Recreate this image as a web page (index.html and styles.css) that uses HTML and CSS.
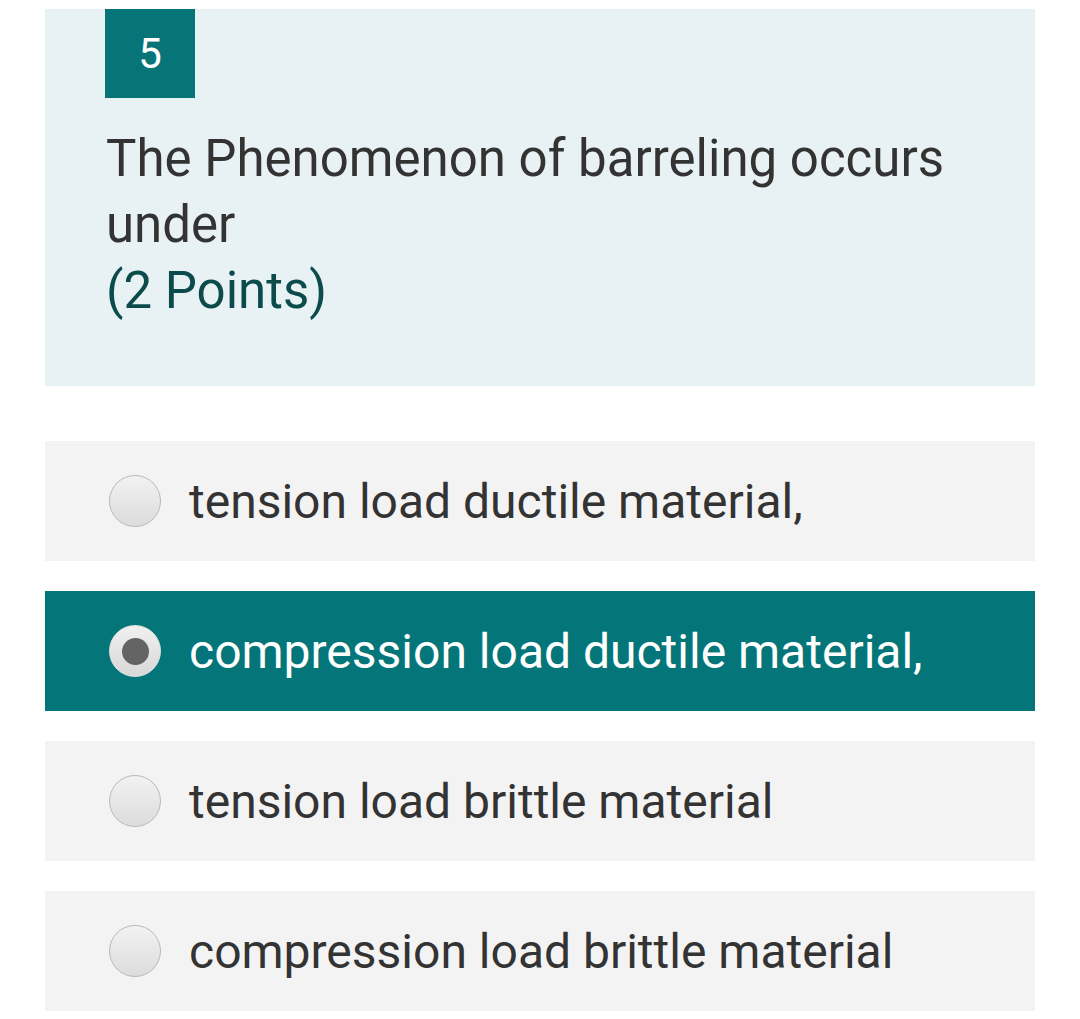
FILE: index.html
```html
<!DOCTYPE html>
<html>
<head>
<meta charset="utf-8">
<link rel="stylesheet" href="styles.css">
</head>
<body>
<div class="page">
  <div class="question">
    <div class="badge">5</div>
    <div class="qtext">The Phenomenon of barreling occurs under<br><span class="points">(2 Points)</span></div>
  </div>
  <div class="options">
    <div class="option"><span class="radio"></span><span class="label">tension load ductile material,</span></div>
    <div class="option selected"><span class="radio"></span><span class="label">compression load ductile material,</span></div>
    <div class="option"><span class="radio"></span><span class="label">tension load brittle material</span></div>
    <div class="option"><span class="radio"></span><span class="label">compression load brittle material</span></div>
  </div>
</div>
</body>
</html>
```
FILE: styles.css
```css
html, body {
  margin: 0;
  padding: 0;
  background: #ffffff;
}
body {
  font-family: Roboto, "Noto Sans", sans-serif;
}
.page {
  width: 990px;
  margin-left: 45px;
  padding-top: 9px;
}
.question {
  background: #e8f1f4;
  height: 377px;
  padding-left: 61px;
  box-sizing: border-box;
}
.badge {
  width: 90px;
  height: 89px;
  margin-left: -1px;
  background: #077478;
  color: #ffffff;
  font-size: 42px;
  display: flex;
  align-items: center;
  justify-content: center;
}
.qtext {
  margin-top: 28px;
  font-size: 51px;
  line-height: 66px;
  color: #333333;
  width: 880px;
}
.points {
  color: #0b4b4c;
}
.options {
  margin-top: 55px;
  display: flex;
  flex-direction: column;
  gap: 30px;
}
.option {
  height: 120px;
  background: #f3f3f3;
  display: flex;
  align-items: center;
  padding-left: 64px;
  color: #333333;
  font-size: 48px;
}
.option.selected {
  background: #047679;
  color: #ffffff;
}
.radio {
  width: 52px;
  height: 52px;
  border-radius: 50%;
  border: 1px solid #b9b9b9;
  background: linear-gradient(#f2f2f2, #dcdcdc);
  box-sizing: border-box;
  margin-right: 28px;
  flex: none;
  display: flex;
  align-items: center;
  justify-content: center;
}
.selected .radio {
  background: linear-gradient(#f0f0f0, #d8d8d8);
  border-color: #e0e0e0;
}
.selected .radio::after {
  content: "";
  width: 27px;
  height: 27px;
  border-radius: 50%;
  background: #646464;
}
.label {
  display: block;
}
```
